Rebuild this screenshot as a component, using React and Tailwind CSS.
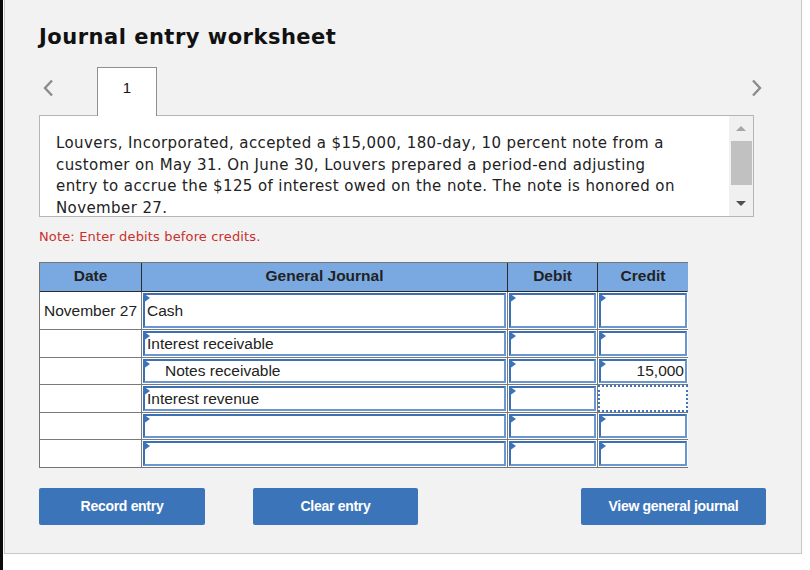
import React from 'react';

const rows = [
  { date: 'November 27', account: 'Cash', indent: false, credit: '' },
  { date: '', account: 'Interest receivable', indent: false, credit: '' },
  { date: '', account: 'Notes receivable', indent: true, credit: '15,000' },
  { date: '', account: 'Interest revenue', indent: false, credit: '', focused: true },
  { date: '', account: '', indent: false, credit: '' },
  { date: '', account: '', indent: false, credit: '' },
];

function Chevron({ dir }) {
  const d = dir === 'left' ? 'M9 1.5 L2 9 L9 16.5' : 'M2 1.5 L9 9 L2 16.5';
  return (
    <svg width="11" height="18" viewBox="0 0 11 18" className="block">
      <path d={d} fill="none" stroke="#8c8c8c" strokeWidth="2.4" />
    </svg>
  );
}

function EntryCell({ children, focused, align = 'left' }) {
  if (focused) {
    return <div className="bg-white border-2 border-dotted border-[#3f74bd]" />;
  }
  return (
    <div className="bg-white p-px flex">
      <div
        className={`relative flex-1 border-2 border-[#6b97d0] border-l-[#3d6fb3] border-t-[#3d6fb3] bg-white flex items-center ${
          align === 'right' ? 'justify-end pr-[1px]' : 'pl-[2px]'
        }`}
      >
        <span className="absolute -top-[2px] -left-[2px] w-0 h-0 border-y-[5px] border-y-transparent border-l-[7px] border-l-[#3b73b9]" />
        {children}
      </div>
    </div>
  );
}

export default function App() {
  return (
    <div className="w-[810px] h-[570px] bg-white flex font-['DejaVu_Sans',sans-serif]">
      <div className="w-[3px] h-full bg-[#0b0b0b]" />
      <div className="ml-px w-[798px] h-[554px] bg-[#f2f2f2] border border-t-0 border-[#c8c8c8] pl-[34px] pt-[22px]">
        <h1 className="text-[21px] leading-[30px] font-bold tracking-[0.5px] text-[#111]">Journal entry worksheet</h1>

        {/* tabs */}
        <div className="mt-[14px] flex items-end w-[723px]">
          <div className="w-[58px] h-[49px] flex items-center pl-[4px] pb-[6px]">
            <Chevron dir="left" />
          </div>
          <div className="relative z-10 -mb-px w-[60px] h-[49px] bg-white border border-b-0 border-[#8f8f8f] flex justify-center pt-[9px] text-[15px] font-['Liberation_Sans',sans-serif] text-[#111]">
            1
          </div>
          <div className="flex-1" />
          <div className="h-[49px] flex items-center pb-[6px]">
            <Chevron dir="right" />
          </div>
        </div>

        {/* question box */}
        <div className="w-[715px] h-[102px] bg-white border border-[#b5b5b5] flex">
          <div className="flex-1 overflow-hidden pl-[16px] pt-[17px] text-[15px] leading-[21.5px] tracking-[0.4px] text-[#222]">
            Louvers, Incorporated, accepted a $15,000, 180-day, 10 percent note from a<br />
            customer on May 31. On June 30, Louvers prepared a period-end adjusting<br />
            entry to accrue the $125 of interest owed on the note. The note is honored on<br />
            November 27.
          </div>
          <div className="w-[24px] bg-[#f0f0f0] flex flex-col items-center pt-[10px] pb-[10px]">
            <span className="w-0 h-0 border-x-[5px] border-x-transparent border-b-[5px] border-b-[#a6a6a6]" />
            <div className="mt-[10px] w-[21px] h-[44px] bg-[#c1c1c1]" />
            <div className="flex-1" />
            <span className="w-0 h-0 border-x-[5px] border-x-transparent border-t-[5px] border-t-[#505050]" />
          </div>
        </div>

        <p className="mt-[11px] text-[13px] leading-[18px] tracking-[0.15px] text-[#c8312b]">Note: Enter debits before credits.</p>

        {/* journal table */}
        <div className="mt-[16px] w-[649px] border border-[#747474] font-['Liberation_Sans',sans-serif] text-[15.5px] text-[#222]">
          <div className="grid grid-cols-[101px_365px_89px_90px] h-[29px] gap-x-px bg-[#2b2b2b] border-b border-[#2b2b2b]">
            {['Date', 'General Journal', 'Debit', 'Credit'].map((h) => (
              <div key={h} className="bg-[#7aa9e2] font-bold flex items-center justify-center pb-[3px]">
                {h}
              </div>
            ))}
          </div>
          <div className="grid grid-cols-[101px_365px_89px_90px] grid-rows-[37px_27px_26px_27px_26px_27px] gap-px bg-[#7a7a7a]">
            {rows.map((r, i) => (
              <React.Fragment key={i}>
                <div className="bg-white pl-[4px] flex items-center whitespace-nowrap">{r.date}</div>
                <EntryCell>
                  <span className={r.indent ? 'pl-[18px]' : ''}>{r.account}</span>
                </EntryCell>
                <EntryCell />
                <EntryCell focused={r.focused} align="right">
                  {r.credit}
                </EntryCell>
              </React.Fragment>
            ))}
          </div>
        </div>

        {/* buttons */}
        <div className="mt-[20px] flex w-[727px] font-['Liberation_Sans',sans-serif] text-[14px] font-bold text-white">
          <button className="w-[166px] h-[37px] bg-[#3c74ba] rounded-[2px] tracking-[-0.3px]">Record entry</button>
          <button className="ml-[48px] w-[165px] h-[37px] bg-[#3c74ba] rounded-[2px] tracking-[-0.3px]">Clear entry</button>
          <div className="flex-1" />
          <button className="w-[185px] h-[37px] bg-[#3c74ba] rounded-[2px] tracking-[-0.3px]">View general journal</button>
        </div>
      </div>
    </div>
  );
}
